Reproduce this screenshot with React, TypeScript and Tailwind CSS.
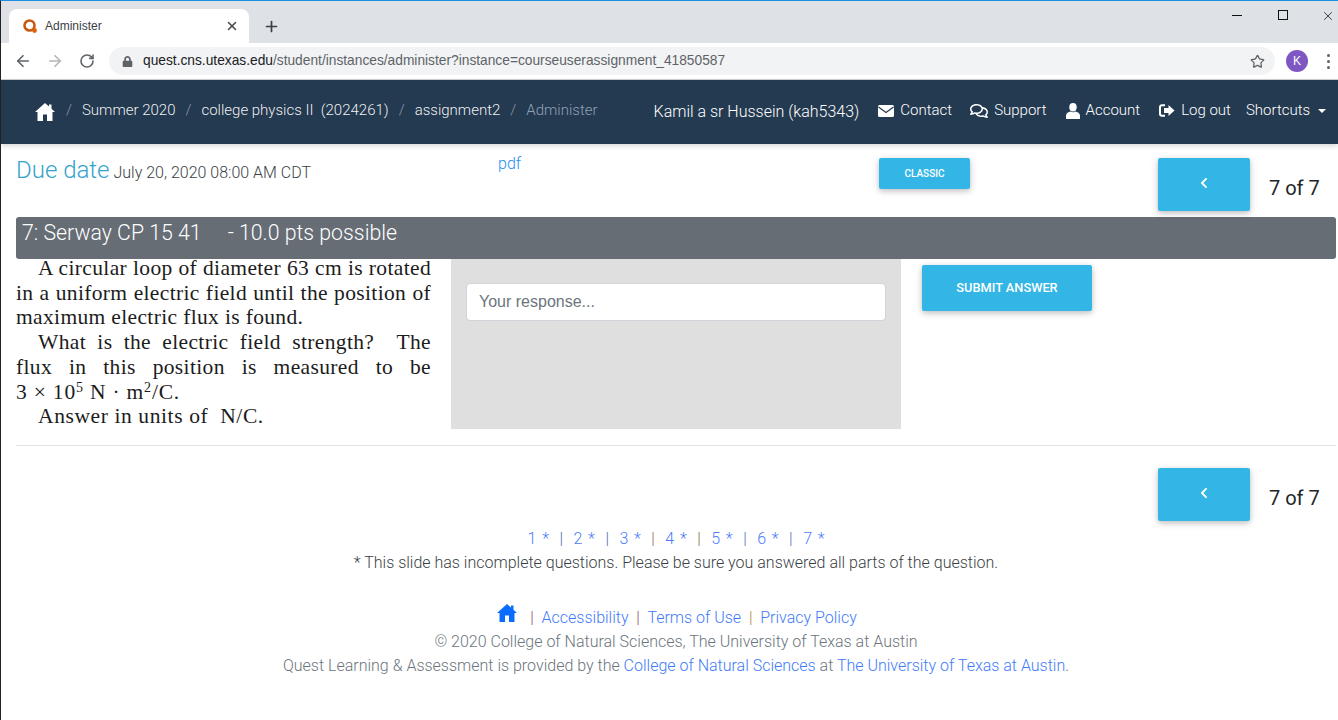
import { ArrowLeft, ArrowRight, RotateCw, Star, X, Plus } from 'lucide-react'
import { FaRegComments, FaLock, FaChevronLeft } from 'react-icons/fa'

const latex = 'font-["Liberation_Serif",serif] text-[21.5px] leading-[24.7px] tracking-[0.35px] text-[#1c1c1c] whitespace-pre'

function HomeIcon({ className }: { className: string }) {
  return (
    <svg width="20" height="18" viewBox="0 0 20 18" fill="currentColor" className={className}>
      <path d="M10 0 L14 3.6 V1.5 H16.5 V5.8 L20 9 H17.5 V18 H12 V11.5 H8 V18 H2.5 V9 H0 Z" />
    </svg>
  )
}

function Envelope() {
  return (
    <svg width="16" height="12" viewBox="0 0 16 12">
      <rect width="16" height="12" rx="1.5" fill="#fff" />
      <path d="M0.5 2 L8 7.5 L15.5 2" fill="none" stroke="#243a51" strokeWidth="1.2" />
    </svg>
  )
}

function UserIcon() {
  return (
    <svg width="14" height="16" viewBox="0 0 14 16" fill="#fff">
      <ellipse cx="7" cy="4.2" rx="3.7" ry="4.2" />
      <path d="M0 16 V12.5 C0 10.2 2.5 9 4.6 8.6 C6 9.6 8 9.6 9.4 8.6 C11.5 9 14 10.2 14 12.5 V16 Z" />
    </svg>
  )
}

function LogoutIcon() {
  return (
    <svg width="16" height="13" viewBox="0 0 16 13">
      <path d="M6 1.2 H3 A2 2 0 0 0 1 3.2 V9.8 A2 2 0 0 0 3 11.8 H6" fill="none" stroke="#fff" strokeWidth="2" />
      <path d="M9.5 1 L15.5 6.5 L9.5 12 V9 H5 V4 H9.5 Z" fill="#fff" />
    </svg>
  )
}

function Crumb({ children, last }: { children: string; last?: boolean }) {
  return (
    <>
      <span className="mx-[10px] text-[#8b98a8]">/</span>
      <span className={last ? 'text-[#8fa1b5]' : 'text-white/95'}>{children}</span>
    </>
  )
}

function NavItem({ icon, label, className }: { icon: React.ReactNode; label: string; className: string }) {
  return (
    <span className={`mt-[1px] flex items-center gap-[6px] ${className}`}>
      {icon}
      {label}
    </span>
  )
}

function BackButton() {
  return (
    <div className="flex items-start">
      <button className="flex h-[53px] w-[92px] items-center justify-center rounded-[2px] bg-[#33b5e5] pb-[4px] text-white shadow-[0_2px_5px_rgba(0,0,0,0.16),0_2px_10px_rgba(0,0,0,0.12)]">
        <FaChevronLeft size={12} />
      </button>
      <span className="ml-[19px] mt-[17px] text-[20px] font-normal leading-[26px] text-[#212529]">7 of 7</span>
    </div>
  )
}

function JustifiedLine({ children, indent }: { children: string; indent?: boolean }) {
  return (
    <div className={`whitespace-normal [text-align-last:justify] ${indent ? 'pl-[22px]' : ''}`}>{children}</div>
  )
}

export default function App() {
  return (
    <div className="h-[720px] w-[1338px] overflow-hidden border-l border-t border-l-[#222] border-t-[#1a8fe3] bg-white font-['Roboto',sans-serif]">
      {/* tab strip */}
      <div className="flex h-[42px] items-end bg-[#dee1e6] pl-[8px]">
        <div className="flex h-[34px] w-[240px] items-center rounded-t-[8px] bg-white pl-[13px] pr-[10px] font-['Liberation_Sans',sans-serif] text-[12px] text-[#3c4043]">
          <svg width="16" height="16" viewBox="0 0 16 16" fill="none">
            <circle cx="7.5" cy="7.5" r="5" stroke="#c8590f" strokeWidth="2.6" />
            <circle cx="12.5" cy="12.5" r="2.4" fill="#d9640f" />
          </svg>
          <span className="ml-[7px] flex-1">Administer</span>
          <X size={14} strokeWidth={2.6} className="text-[#45484c]" />
        </div>
        <Plus size={17} strokeWidth={2.4} className="mb-[8px] ml-[14px] text-[#3c4043]" />
        <div className="ml-auto flex h-full items-start self-start text-[#111]">
          <div className="mr-[36px] mt-[14px] h-px w-[10px] bg-[#111]" />
          <div className="mr-[33px] mt-[9px] h-[10px] w-[10px] border border-[#111]" />
          <X size={14} strokeWidth={1.3} className="mr-[3px] mt-[8px]" />
        </div>
      </div>
      {/* address bar */}
      <div className="flex h-[37px] items-center border-b border-b-[#d0d2d5] bg-white pl-[13px]">
        <ArrowLeft size={18} strokeWidth={2.2} className="text-[#5f6368]" />
        <ArrowRight size={18} strokeWidth={2.2} className="ml-[14px] text-[#b4b6b9]" />
        <RotateCw size={16} strokeWidth={2.4} className="ml-[15px] text-[#5f6368]" />
        <div className="ml-[14px] flex h-[28px] w-[1166px] items-center rounded-full bg-[#f1f3f4] pl-[13px] pr-[10px] font-['Liberation_Sans',sans-serif] text-[13.75px]">
          <FaLock size={11} className="text-[#5f6368]" />
          <span className="ml-[10px] flex-1 pt-[1px] text-[#5f6368]">
            <span className="text-[#202124]">quest.cns.utexas.edu</span>/student/instances/administer?instance=courseuserassignment_41850587
          </span>
          <Star size={15} strokeWidth={2} className="text-[#5f6368]" />
        </div>
        <div className="ml-[11px] flex h-[22px] w-[22px] items-center justify-center rounded-full bg-[#7e57c2] font-['Liberation_Sans',sans-serif] text-[12px] text-white">K</div>
        <div className="ml-[19px] flex flex-col gap-[3px]">
          <span className="h-[3px] w-[3px] rounded-full bg-[#5f6368]" />
          <span className="h-[3px] w-[3px] rounded-full bg-[#5f6368]" />
          <span className="h-[3px] w-[3px] rounded-full bg-[#5f6368]" />
        </div>
      </div>
      {/* navbar */}
      <nav className="flex h-[64px] items-center whitespace-pre bg-[#243a51] pb-[4px] pl-[34px] text-[15px] font-light text-white shadow-[0_2px_5px_rgba(0,0,0,0.16)]">
        <HomeIcon className="mt-[3px] text-white" />
        <div className="ml-[1px] flex items-center">
          <Crumb>Summer 2020</Crumb>
          <Crumb>college physics II  (2024261)</Crumb>
          <Crumb>assignment2</Crumb>
          <Crumb last>Administer</Crumb>
        </div>
        <span className="ml-[56px] mt-[3px] text-[16px]">Kamil a sr Hussein (kah5343)</span>
        <NavItem className="ml-[19px]" icon={<Envelope />} label="Contact" />
        <NavItem className="ml-[18px]" icon={<FaRegComments size={18} />} label="Support" />
        <NavItem className="ml-[19px]" icon={<UserIcon />} label="Account" />
        <NavItem className="ml-[19px]" icon={<LogoutIcon />} label="Log out" />
        <span className="ml-[15px] mt-[1px] flex items-center">
          Shortcuts
          <span className="ml-[8px] h-0 w-0 border-x-[4px] border-t-[4px] border-x-transparent border-t-white" />
        </span>
      </nav>
      {/* page content */}
      <main className="px-[15px] text-[#3a3f44]">
        <div className="grid h-[73px] grid-cols-[482px_381px_279px_1fr] pt-[14px]">
          <div className="-mt-[1px] flex items-baseline font-light">
            <span className="text-[24px] leading-[26px] text-[#33a3cc]">Due date</span>
            <span className="ml-[4px] text-[16px]">July 20, 2020 08:00 AM CDT</span>
          </div>
          <a className="-mt-[6px] text-[16px] font-light leading-[24px] text-[#1d8df0]">pdf</a>
          <button className="h-[31px] w-[91px] rounded-[2px] bg-[#33b5e5] text-[10px] font-medium uppercase text-white shadow-[0_2px_5px_rgba(0,0,0,0.16),0_2px_10px_rgba(0,0,0,0.12)]">Classic</button>
          <BackButton />
        </div>
        <div className="flex h-[42px] w-[1320px] items-start rounded-[3px] bg-[#666d75] pl-[6px] pt-[2px] text-[21.3px] font-light leading-[28px] text-white whitespace-pre">7: Serway CP 15 41     - 10.0 pts possible</div>
        <div className="flex h-[170px]">
          <div className={`-mt-[3px] w-[415px] ${latex}`}>
            <JustifiedLine indent>A circular loop of diameter 63 cm is rotated</JustifiedLine>
            <JustifiedLine>in a uniform electric field until the position of</JustifiedLine>
            <div>maximum electric flux is found.</div>
            <JustifiedLine indent>{'What is the electric field strength?\u00a0 The'}</JustifiedLine>
            <JustifiedLine>flux in this position is measured to be</JustifiedLine>
            <div className="tracking-[0.8px]">3 × 10<sup className="text-[14px] leading-[0]">5</sup> N · m<sup className="text-[14px] leading-[0]">2</sup>/C.</div>
            <div className="pl-[22px] tracking-[0.6px]">Answer in units of  N/C.</div>
          </div>
          <div className="ml-[20px] h-full w-[450px] bg-[#dfdfdf] px-[15px] pt-[24px]">
            <div className="flex h-[38px] items-center rounded-[4px] border border-[#ced4da] bg-white px-[12px] font-['Liberation_Sans',sans-serif] text-[16px] text-[#6c757d]">Your response...</div>
          </div>
          <button className="ml-[21px] mt-[6px] h-[46px] w-[170px] rounded-[2px] bg-[#33b5e5] text-[12.8px] font-medium uppercase text-white shadow-[0_2px_5px_rgba(0,0,0,0.16),0_2px_10px_rgba(0,0,0,0.12)]">Submit answer</button>
        </div>
        <hr className="mt-[16px] w-[1320px] border-t border-[#e3e3e3]" />
        <div className="ml-[1142px] mt-[22px]">
          <BackButton />
        </div>
        <div className="w-[1320px] text-center text-[16px] font-light leading-[24px]">
          <div className="mt-[6px] whitespace-pre pl-[1px] tracking-[0.9px] text-[#4d7dfb]">
            1 *  <span className="text-[#4a6fb0]">|</span>  2 *  <span className="text-[#4a6fb0]">|</span>  3 *  <span className="text-[#a0603c]">|</span>  4 *  <span className="text-[#806a30]">|</span>  5 *  <span className="text-[#4a6fb0]">|</span>  6 *  <span className="text-[#4a6fb0]">|</span>  7 *
          </div>
          <div>* This slide has incomplete questions. Please be sure you answered all parts of the question.</div>
          <div className="mt-[31px] flex justify-center whitespace-pre pl-[2px] text-[#6c757d]">
            <HomeIcon className="-mt-[2px] text-[#0a6cff]" />
            <span className="ml-[13px]"><span className="text-[#8a4a70]">|</span>  <span className="text-[#3f7bfa]">Accessibility</span>  <span className="text-[#8a4a70]">|</span>  <span className="text-[#3f7bfa]">Terms of Use</span>  <span className="text-[#b08030]">|</span>  <span className="text-[#3f7bfa]">Privacy Policy</span></span>
          </div>
          <div className="text-[#6c757d]">© 2020 College of Natural Sciences, The University of Texas at Austin</div>
          <div className="text-[#6c757d]">
            Quest Learning &amp; Assessment is provided by the <span className="text-[#3f7bfa]">College of Natural Sciences</span> at <span className="text-[#3f7bfa]">The University of Texas at Austin</span>.
          </div>
        </div>
      </main>
    </div>
  )
}
